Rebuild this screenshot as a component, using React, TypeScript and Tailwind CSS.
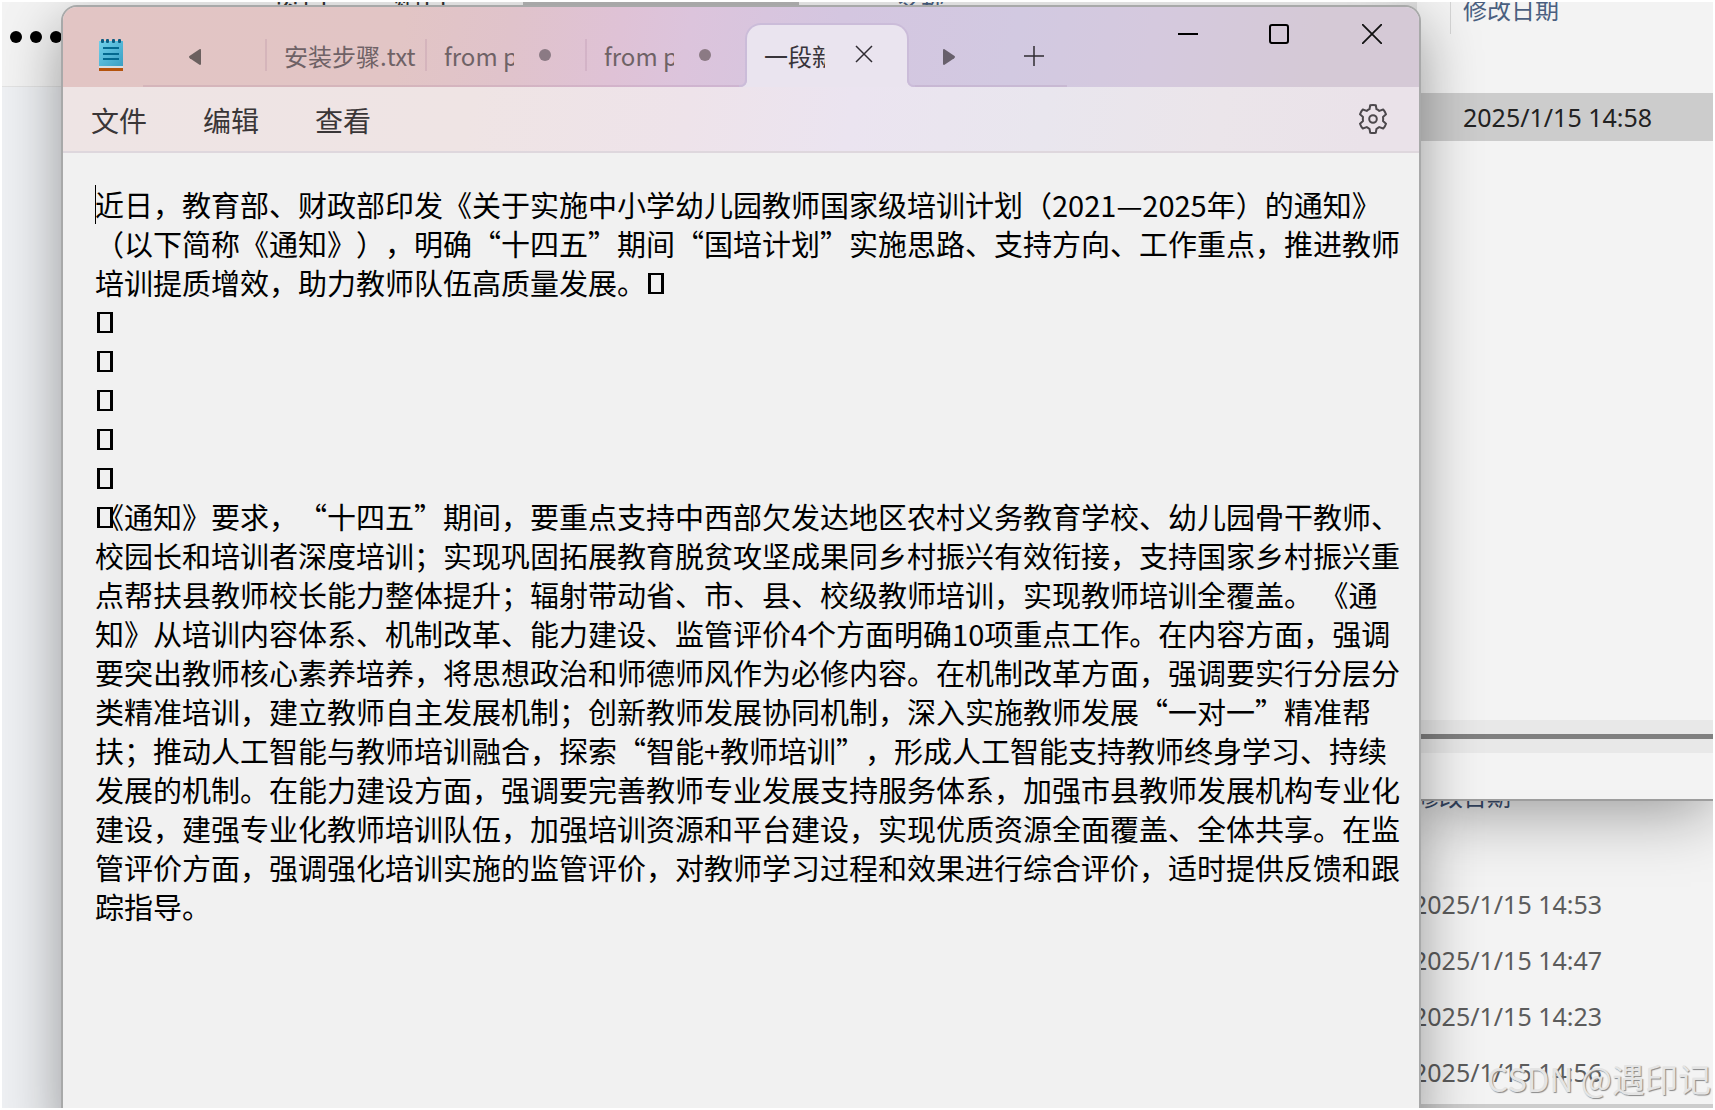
import React, { useState } from "react";

const NOTE = [
  "近日，教育部、财政部印发《关于实施中小学幼儿园教师国家级培训计划（2021—2025年）的通知》",
  "（以下简称《通知》），明确“十四五”期间“国培计划”实施思路、支持方向、工作重点，推进教师",
  "培训提质增效，助力教师队伍高质量发展。",
  "",
  "",
  "",
  "",
  "",
  "《通知》要求，“十四五”期间，要重点支持中西部欠发达地区农村义务教育学校、幼儿园骨干教师、",
  "校园长和培训者深度培训；实现巩固拓展教育脱贫攻坚成果同乡村振兴有效衔接，支持国家乡村振兴重",
  "点帮扶县教师校长能力整体提升；辐射带动省、市、县、校级教师培训，实现教师培训全覆盖。 《通",
  "知》从培训内容体系、机制改革、能力建设、监管评价4个方面明确10项重点工作。在内容方面，强调",
  "要突出教师核心素养培养，将思想政治和师德师风作为必修内容。在机制改革方面，强调要实行分层分",
  "类精准培训，建立教师自主发展机制；创新教师发展协同机制，深入实施教师发展“一对一”精准帮",
  "扶；推动人工智能与教师培训融合，探索“智能+教师培训”，形成人工智能支持教师终身学习、持续",
  "发展的机制。在能力建设方面，强调要完善教师专业发展支持服务体系，加强市县教师发展机构专业化",
  "建设，建强专业化教师培训队伍，加强培训资源和平台建设，实现优质资源全面覆盖、全体共享。在监",
  "管评价方面，强调强化培训实施的监管评价，对教师学习过程和效果进行综合评价，适时提供反馈和跟",
  "踪指导。",
].join("\n");

function ControlMark() {
  return <span className="block h-[21px] w-4 border-x-3 border-y-2 border-black" />;
}

function NotepadIcon() {
  return (
    <svg width="24" height="32" viewBox="0 0 24 32" aria-hidden="true">
      <defs>
        <linearGradient id="sheet" x1="0" y1="0" x2="1" y2="1">
          <stop offset="0" stopColor="#6fd0ea" />
          <stop offset="1" stopColor="#3a9fc4" />
        </linearGradient>
      </defs>
      <rect y="29" width="24" height="3" fill="#b5530c" />
      <rect y="27" width="24" height="2" fill="#d9dde0" />
      <rect y="2" width="24" height="25" fill="url(#sheet)" />
      {[3.5, 8.5, 14.5, 20.5].map((x) => (
        <rect key={x} x={x - 1.5} y="0" width="3" height="4" rx="1" fill="#0b5c82" />
      ))}
      <path d="M4 9h16M4 15h16M4 20h16" stroke="#03698f" strokeWidth="2" />
    </svg>
  );
}

function Corner({ side }: { side: "left" | "right" }) {
  return (
    <svg
      className={
        side === "left" ? "absolute bottom-0 -left-2 z-10" : "absolute bottom-0 -right-2 z-10 -scale-x-100"
      }
      width="10"
      height="8"
      viewBox="0 0 10 8"
      aria-hidden="true"
    >
      <path d="M10 0H8a7 7 0 0 1-7 8h9z" fill="#eae4ef" />
      <path d="M7 0c0 4-2 7-6 7H0" fill="none" stroke="#cbbcd9" strokeWidth="2" />
    </svg>
  );
}

function IdleTab({ title, dirty }: { title: string; dirty?: boolean }) {
  return (
    <button
      role="tab"
      aria-selected="false"
      className="flex w-40 shrink-0 items-start border-b-2 border-[#86508022] pt-4 text-[#6f6266]"
    >
      <span className="h-8 w-0.5 shrink-0 bg-[#86508022]" />
      <span
        className={
          dirty
            ? "-mt-px ml-[17px] w-[70px] overflow-hidden whitespace-nowrap text-left"
            : "-mt-px ml-[17px] whitespace-nowrap"
        }
      >
        {title}
      </span>
      {dirty && <span className="ml-[25px] mt-2.5 size-3 shrink-0 rounded-full bg-[#8b7a84]" />}
    </button>
  );
}

function Notepad() {
  const [text, setText] = useState(NOTE);
  return (
    <section
      aria-label="记事本"
      className="absolute -bottom-5 left-[59px] right-[292px] top-[3px] z-20 flex flex-col overflow-hidden rounded-t-2xl border-2 border-[#a8a9a9] bg-[#f1f1f1] shadow-[0_20px_58px_rgba(0,0,0,0.38)]"
    >
      <header className="flex h-20 shrink-0 bg-[linear-gradient(100deg,#e2c5c4_0%,#e2c5c5_25%,#e0c3cb_33%,#dfc2d6_41%,#dcc4dc_46%,#d4c6e0_57%,#d2c9e1_70%,#d5c9de_80%,#d5c9d6_92%)]">
        <div className="w-20 shrink-0 pl-9 pt-8">
          <NotepadIcon />
        </div>
        <div role="tablist" className="flex min-w-0 pt-4 text-2xl leading-9">
          <button
            aria-label="向左滚动"
            className="flex w-[122px] shrink-0 items-start border-b-2 border-[#86508022] pl-[46px] pt-[26px]"
          >
            <svg width="12" height="16" viewBox="0 0 12 16" fill="#6b605f">
              <path d="M10.500.300C11.400-.200 12 .300 12 1.200v13.600c0 .900-.600 1.400-1.500.900L.800 9.200a1.500 1.500 0 0 1 0-2.400z" />
            </svg>
          </button>
          <IdleTab title="安装步骤.txt" />
          <IdleTab title="from p" dirty />
          <IdleTab title="from p" dirty />
          <div className="relative flex w-[164px] shrink-0 items-start rounded-t-2xl border-x-2 border-t-2 border-[#cbbcd9] bg-[#eae4ef] pl-[17px] pt-[13px] text-[#38343a]">
            <button role="tab" aria-selected="true" className="w-[61px] overflow-hidden whitespace-nowrap text-left">
              一段新闻
            </button>
            <button aria-label="关闭标签页" className="ml-[30px] mt-[7px]">
              <svg width="18" height="18" viewBox="0 0 18 18" fill="none" stroke="#2f2b31" strokeWidth="1.500">
                <path d="M1 1l16 16M17 1L1 17" />
              </svg>
            </button>
            <Corner side="left" />
            <Corner side="right" />
          </div>
          <button
            aria-label="向右滚动"
            className="flex w-20 shrink-0 items-start border-b-2 border-[#86508022] pl-[34px] pt-[26px]"
          >
            <svg className="-scale-x-100" width="12" height="16" viewBox="0 0 12 16" fill="#68606c">
              <path d="M10.500.300C11.400-.200 12 .300 12 1.200v13.600c0 .900-.600 1.400-1.500.900L.800 9.200a1.500 1.500 0 0 1 0-2.400z" />
            </svg>
          </button>
          <button
            aria-label="新建标签页"
            className="flex w-[78px] shrink-0 items-start border-b-2 border-[#86508022] pl-[35px] pt-[23px]"
          >
            <svg width="20" height="20" viewBox="0 0 20 20" fill="none" stroke="#2f2b31" strokeWidth="1.500">
              <path d="M10 0v20M0 10h20" />
            </svg>
          </button>
        </div>
        <div className="ml-auto flex h-[54px] shrink-0">
          <button aria-label="最小化" className="flex w-[91px] items-center justify-center">
            <span className="h-0.5 w-5 bg-black" />
          </button>
          <button aria-label="最大化" className="flex w-[92px] items-center justify-center">
            <span className="size-5 rounded-[3px] border-2 border-black" />
          </button>
          <button aria-label="关闭" className="flex w-[94px] items-center justify-center">
            <svg width="20" height="20" viewBox="0 0 20 20" fill="none" stroke="#111" strokeWidth="1.800">
              <path d="M0 0l20 20M20 0L0 20" />
            </svg>
          </button>
        </div>
      </header>
      <nav className="flex h-[66px] shrink-0 items-center gap-14 border-b-2 border-[#ded7dd] bg-[linear-gradient(100deg,#eee4e4_0%,#efe4e4_30%,#eee3ea_46%,#ebe4f0_58%,#e9e6ee_72%,#ebe5ea_85%,#eae2e9_96%)] pl-7 pr-8 text-[28px] text-[#3a3637]">
        <button className="pt-0.5">文件</button>
        <button className="pt-0.5">编辑</button>
        <button className="pt-0.5">查看</button>
        <button aria-label="设置" className="ml-auto">
          <svg width="28" height="30" viewBox="0 0 28 30" fill="none" stroke="#4c484c" strokeWidth="2" strokeLinejoin="round">
            <path d="M11.200 1.300Q14 .700 16.800 1.300L17.500 5.200Q19.200 5.900 20.300 6.900L24.200 5.500Q26.200 7.600 27 10.300L24 12.900Q24.300 15 24 17.100L27 19.700Q26.200 22.400 24.200 24.500L20.300 23.100Q19.200 24.100 17.500 24.800L16.800 28.700Q14 29.300 11.200 28.700L10.500 24.800Q8.800 24.100 7.700 23.100L3.800 24.500Q1.800 22.400 1 19.700L4 17.100Q3.700 15 4 12.900L1 10.300Q1.800 7.600 3.800 5.500L7.700 6.900Q8.800 5.900 10.500 5.200Z" />
            <circle cx="14" cy="15" r="3.800" />
          </svg>
        </button>
      </nav>
      <div className="relative flex-1 pl-8 pt-8">
        <textarea
          aria-label="文本编辑器"
          spellCheck={false}
          wrap="off"
          value={text}
          onChange={(e) => setText(e.target.value)}
          className="block h-full w-full resize-none overflow-hidden bg-transparent text-[29px] leading-[39px] text-black outline-none [text-spacing-trim:space-all]"
        />
        <div aria-hidden="true" className="pointer-events-none absolute left-8 top-8">
          <div className="h-[39px] w-px bg-black" />
          <div className="h-[39px]" />
          <div className="flex h-[39px] items-center pl-[553px] pt-0.5">
            <ControlMark />
          </div>
          {[0, 1, 2, 3, 4, 5].map((row) => (
            <div key={row} className="flex h-[39px] items-center pl-0.5 pt-0.5">
              <ControlMark />
            </div>
          ))}
        </div>
      </div>
    </section>
  );
}

function UpperWindow() {
  return (
    <section className="relative z-10 flex h-[799px] shrink-0 flex-col border-b-2 border-[#9d9d9d] bg-[#f3f3f3] shadow-[0_8px_64px_rgba(0,0,0,0.4)]">
      <div className="ml-[33px] h-8 border-l border-[#d5d5d5] pl-3 text-[#4a5f80]">
        <div className="-mt-2 text-2xl leading-8">修改日期</div>
      </div>
      <div className="mt-[59px] h-12 bg-[#ccc] pl-[46px] leading-[48px] text-[#222]">2025/1/15 14:58</div>
      <div className="mt-auto h-[33px] shrink-0 bg-[#e8e8e8] py-3.5">
        <div className="h-[5px] bg-[#808080]" />
      </div>
      <div className="h-[46px] shrink-0" />
    </section>
  );
}

function LowerWindow() {
  return (
    <section className="flex flex-1 flex-col border-b-4 border-[#ccc] bg-[#f3f3f3] text-[#5c5c5c]">
      <div className="-ml-0.5 -mt-[22px] h-9 text-2xl leading-9 text-[#3c4f6f]">修改日期</div>
      <ul className="-ml-1 mt-[61px]">
        {["14:53", "14:47", "14:23", "14:56"].map((time) => (
          <li key={time} className="h-14 leading-[56px]">
            2025/1/15 {time}
          </li>
        ))}
      </ul>
    </section>
  );
}

export default function App() {
  return (
    <main className="h-screen bg-white p-0.5 font-['Noto_Sans_CJK_SC',sans-serif]">
      <div className="relative flex h-full justify-between overflow-hidden bg-[#eef0f3]">
        <div className="flex flex-1 flex-col">
          <div className="flex h-[85px] border-b border-[#e2e2e2] bg-[#f3f3f3]">
            <div className="flex w-[271px] shrink-0 gap-2 pl-2 pt-[29px]">
              <span className="size-3 rounded-full bg-black" />
              <span className="size-3 rounded-full bg-black" />
              <span className="size-3 rounded-full bg-black" />
            </div>
            <div className="-mt-[22px] flex gap-16 text-[28px] leading-8 text-[#333]">
              <span>页白</span>
              <span>贴日</span>
            </div>
            <div className="ml-[74px] h-1 w-[276px] bg-[#b8b8b8]" />
            <div className="-mt-3 ml-[98px] text-2xl leading-8 text-[#4a5f80]">名称</div>
          </div>
        </div>
        <div className="flex w-[296px] shrink-0 flex-col font-['Noto_Sans','Noto_Sans_CJK_SC',sans-serif] text-[25px]">
          <UpperWindow />
          <LowerWindow />
        </div>
        <Notepad />
        <div className="pointer-events-none absolute bottom-2.5 right-0.5 z-30 text-[33px] leading-10 text-[#e4e4e4] [text-shadow:1px_1px_1px_#888]">
          CSDN @遇印记
        </div>
      </div>
    </main>
  );
}
